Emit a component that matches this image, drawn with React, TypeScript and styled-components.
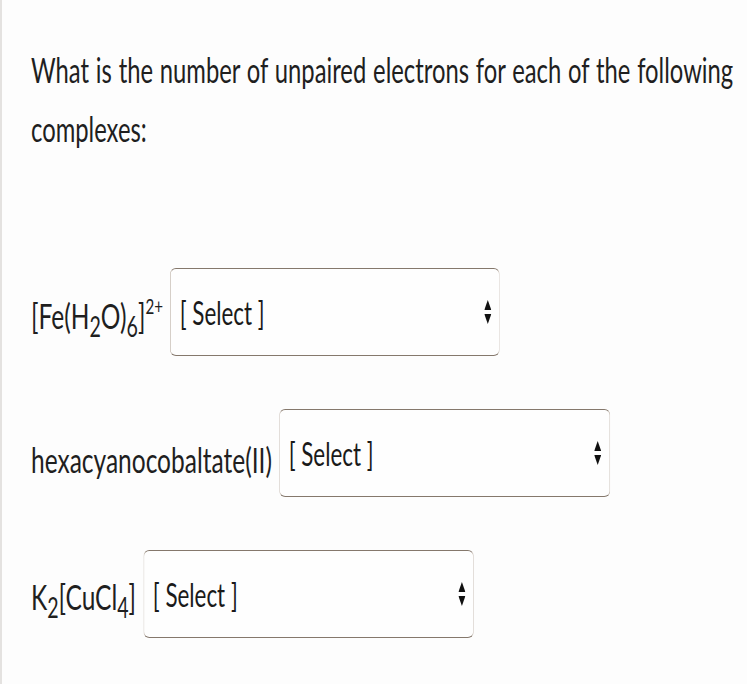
import styled, { createGlobalStyle } from "styled-components";

// the quiz text is set in a narrow face: render at natural width and squeeze it
const SQUEEZE = 0.7;
const px = (n: number) => `${n / SQUEEZE}px`;

const GlobalStyle = createGlobalStyle`
  html, body {
    margin: 0;
    background: #fdfdfd;
  }
  body {
    font-family: Lato, "Open Sans", sans-serif;
    color: #1f1f1f;
    overflow: hidden;
  }
`;

const Page = styled.div`
  min-height: 684px;
  border-left: 2px solid #e4e2e0;
  overflow: hidden;
`;

const Stage = styled.div`
  box-sizing: border-box;
  width: ${px(745)};
  padding: 40px 0 0 ${px(29)};
  transform: scaleX(${SQUEEZE});
  transform-origin: left top;
`;

const Question = styled.p`
  margin: 0 0 110px;
  font-size: 34px;
  line-height: 59px;
  word-spacing: 0.03em;
`;

const Answers = styled.div`
  display: flex;
  flex-direction: column;
  align-items: flex-start;
  gap: 53px;
`;

const Row = styled.div`
  display: flex;
  align-items: center;
  gap: ${px(7)};
`;

const Label = styled.span`
  font-size: 35px;
  line-height: 1;
  padding-top: 12px;
  white-space: nowrap;
`;

const Sub = styled.sub`
  font-size: 0.8em;
  vertical-align: -0.28em;
`;

const Sup = styled.sup`
  font-size: 0.62em;
  vertical-align: 0.7em;
`;

const SelectWrap = styled.div<{ $width: number }>`
  position: relative;
  width: ${(p) => px(p.$width)};
  height: 88px;
`;

const Select = styled.select`
  appearance: none;
  box-sizing: border-box;
  width: 100%;
  height: 100%;
  padding: 0 0 0 ${px(9)};
  border: 1px solid;
  border-color: #85786c #c4bab0 #85786c #c4bab0;
  border-radius: ${px(6)} / 6px;
  background: #fefefe;
  font-family: Lato, "Open Sans", sans-serif;
  font-size: 32px;
  color: #1a1a1a;
`;

const Arrows = styled.svg`
  position: absolute;
  right: ${px(9)};
  top: 50%;
  width: ${px(7)};
  height: 26px;
  margin-top: -13px;
  pointer-events: none;
`;

function ChoiceBox({ width }: { width: number }) {
  return (
    <SelectWrap $width={width}>
      <Select defaultValue="">
        <option value="">[ Select ]</option>
        <option value="0">0</option>
        <option value="1">1</option>
        <option value="2">2</option>
        <option value="3">3</option>
        <option value="4">4</option>
        <option value="5">5</option>
      </Select>
      <Arrows viewBox="0 0 10 26" preserveAspectRatio="none">
        <polygon points="5,1 10,11 0,11" fill="#111" />
        <polygon points="0,15 10,15 5,25" fill="#111" />
      </Arrows>
    </SelectWrap>
  );
}

export default function App() {
  return (
    <Page>
      <GlobalStyle />
      <Stage>
        <Question>
          What is the number of unpaired electrons for each of the following
          complexes:
        </Question>
        <Answers>
          <Row>
            <Label>
              [Fe(H<Sub>2</Sub>O)<Sub>6</Sub>]<Sup>2+</Sup>
            </Label>
            <ChoiceBox width={330} />
          </Row>
          <Row>
            <Label>hexacyanocobaltate(II)</Label>
            <ChoiceBox width={331} />
          </Row>
          <Row>
            <Label>
              K<Sub>2</Sub>[CuCl<Sub>4</Sub>]
            </Label>
            <ChoiceBox width={331} />
          </Row>
        </Answers>
      </Stage>
    </Page>
  );
}
